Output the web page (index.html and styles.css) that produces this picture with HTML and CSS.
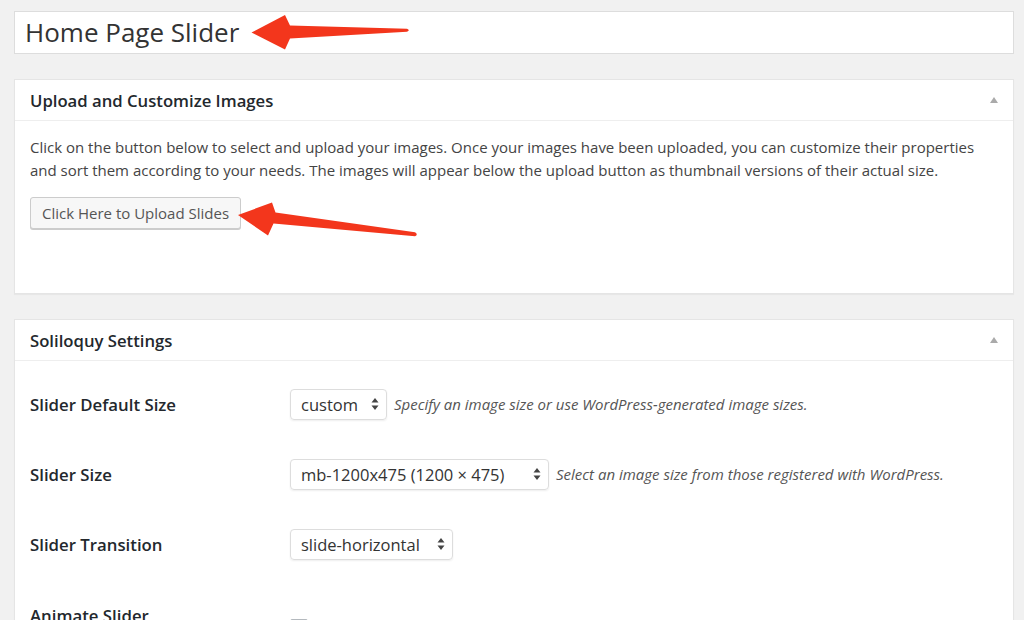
FILE: index.html
```html
<!DOCTYPE html>
<html>
  <head>
    <meta charset="utf-8">
    <link rel="stylesheet" href="styles.css">
  </head>
  <body>
    <div class="wrap">
      <div class="title-box">Home Page Slider</div>

      <div class="postbox">
        <div class="postbox-head">
          <h2>Upload and Customize Images</h2>
          <span class="toggle"></span>
        </div>
        <div class="postbox-body upload">
          <p>Click on the button below to select and upload your images. Once your images have been uploaded, you can customize their properties and sort them according to your needs. The images will appear below the upload button as thumbnail versions of their actual size.</p>
          <button class="button">Click Here to Upload Slides</button>
        </div>
      </div>

      <div class="postbox">
        <div class="postbox-head">
          <h2>Soliloquy Settings</h2>
          <span class="toggle"></span>
        </div>
        <div class="postbox-body settings">
          <div class="field">
            <div class="label">Slider Default Size</div>
            <div class="select w-custom"><span>custom</span>
              <svg width="8" height="12" viewBox="0 0 8 12"><path d="M4 0L7.5 4.5H0.5Z M4 12L7.5 7.5H0.5Z" fill="#444"/></svg>
            </div>
            <span class="hint">Specify an image size or use WordPress-generated image sizes.</span>
          </div>
          <div class="field">
            <div class="label">Slider Size</div>
            <div class="select w-size"><span>mb-1200x475 (1200 × 475)</span>
              <svg width="8" height="12" viewBox="0 0 8 12"><path d="M4 0L7.5 4.5H0.5Z M4 12L7.5 7.5H0.5Z" fill="#444"/></svg>
            </div>
            <span class="hint">Select an image size from those registered with WordPress.</span>
          </div>
          <div class="field">
            <div class="label">Slider Transition</div>
            <div class="select w-trans"><span>slide-horizontal</span>
              <svg width="8" height="12" viewBox="0 0 8 12"><path d="M4 0L7.5 4.5H0.5Z M4 12L7.5 7.5H0.5Z" fill="#444"/></svg>
            </div>
          </div>
          <div class="field top">
            <div class="label">Animate Slider</div>
            <span class="checkbox"></span>
          </div>
        </div>
      </div>
    </div>

    <svg class="arrows" width="1024" height="620" viewBox="0 0 1024 620">
      <path d="M251.5 32.5 L285 15 L290 25.5 L407 28.8 Q410.5 30.3 407 31.8 L290 38.5 L285 49.5 Z" fill="#f3361c"/>
      <path d="M238 215 L272 202.5 L275.5 212.5 L415 232.3 Q418.5 234.5 415 236.2 L273.5 223.5 L268 235.5 Z" fill="#f3361c"/>
    </svg>
  </body>
</html>
```

FILE: styles.css
```css
body {
    margin: 0;
    background: #f1f1f1;
    font-family: "Open Sans", "Liberation Sans", sans-serif;
    color: #444;
    height: 620px;
    overflow: hidden;
}
.wrap {
    padding: 11px 10px 0 14px;
}
.title-box {
    height: 41px;
    line-height: 41px;
    border: 1px solid #dddddd;
    background: #fff;
    padding-left: 10px;
    font-size: 26px;
    color: #333;
}
.postbox {
    margin-top: 25px;
    background: #fff;
    border: 1px solid #e5e5e5;
    box-shadow: 0 1px 1px rgba(0, 0, 0, 0.04);
}
.postbox-head {
    height: 40px;
    border-bottom: 1px solid #eeeeee;
    display: flex;
    align-items: center;
    justify-content: space-between;
    padding: 0 16px 0 15px;
}
.postbox-head h2 {
    margin: 0;
    font-size: 16.7px;
    font-weight: 600;
    color: #23282d;
}
.toggle {
    width: 0;
    height: 0;
    border-left: 4px solid transparent;
    border-right: 4px solid transparent;
    border-bottom: 6px solid #aaa;
    margin-right: -1px;
}
.postbox-body {
    padding: 0 15px;
}
.upload {
    padding-top: 15px;
    height: 157px;
}
.upload p {
    margin: 0 0 15px;
    font-size: 15px;
    line-height: 23px;
    color: #444;
}
.button {
    font-family: inherit;
    font-size: 15px;
    color: #555;
    background: #f7f7f7;
    border: 1px solid #cccccc;
    border-radius: 3px;
    box-shadow: 0 1px 0 #ccc;
    height: 32px;
    padding: 0 11px;
    margin: 0;
}
.settings {
    padding-top: 8px;
}
.field {
    height: 70px;
    display: flex;
    align-items: center;
}
.field.top {
    align-items: flex-start;
}
.label {
    width: 260px;
    flex: none;
    font-size: 16.8px;
    font-weight: 600;
    color: #23282d;
}
.field.top .label {
    padding-top: 26px;
    line-height: 22px;
}
.select {
    height: 29px;
    border: 1px solid #dddddd;
    border-radius: 4px;
    box-shadow: 0 1px 2px rgba(0, 0, 0, 0.07);
    display: flex;
    align-items: center;
    justify-content: space-between;
    padding: 0 7px 0 10px;
    font-size: 16.5px;
    color: #333;
    box-sizing: content-box;
    flex: none;
}
.w-custom {
    width: 78px;
}
.w-size {
    width: 240px;
}
.w-trans {
    width: 144px;
}
.hint {
    margin-left: 7px;
    font-size: 15px;
    font-style: italic;
    color: #555;
}
.checkbox {
    margin-top: 40px;
    width: 16px;
    height: 16px;
    border: 1px solid #b4b9be;
    border-radius: 2px;
    background: #fff;
}
.arrows {
    position: absolute;
    left: 0;
    top: 0;
    pointer-events: none;
}
```
